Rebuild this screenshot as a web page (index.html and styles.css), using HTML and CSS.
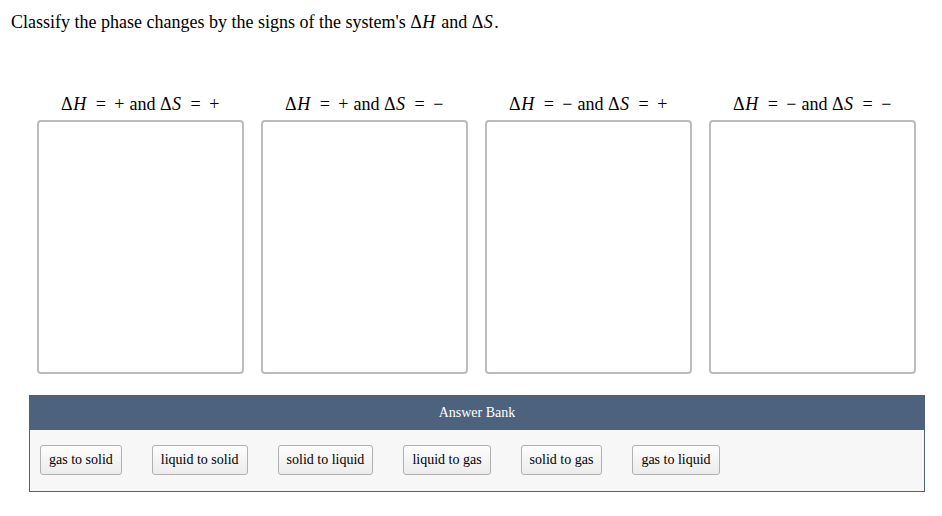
FILE: index.html
```html
<!DOCTYPE html>
<html>
<head>
<meta charset="utf-8">
<link rel="stylesheet" href="styles.css">
</head>
<body>
<div class="page">
  <p class="prompt">Classify the phase changes by the signs of the system's <span class="m">Δ<i>H</i></span> and <span class="m">Δ<i>S</i></span>.</p>
  <div class="bins">
    <div class="bin">
      <div class="label"><span class="m">Δ<i>H</i><span class="op">=</span>+</span> and <span class="m">Δ<i>S</i><span class="op">=</span>+</span></div>
      <div class="drop"></div>
    </div>
    <div class="bin">
      <div class="label"><span class="m">Δ<i>H</i><span class="op">=</span>+</span> and <span class="m">Δ<i>S</i><span class="op">=</span>−</span></div>
      <div class="drop"></div>
    </div>
    <div class="bin">
      <div class="label"><span class="m">Δ<i>H</i><span class="op">=</span>−</span> and <span class="m">Δ<i>S</i><span class="op">=</span>+</span></div>
      <div class="drop"></div>
    </div>
    <div class="bin">
      <div class="label"><span class="m">Δ<i>H</i><span class="op">=</span>−</span> and <span class="m">Δ<i>S</i><span class="op">=</span>−</span></div>
      <div class="drop"></div>
    </div>
  </div>
  <div class="bank">
    <div class="bank-head">Answer Bank</div>
    <div class="bank-body">
      <span class="chip">gas to solid</span>
      <span class="chip">liquid to solid</span>
      <span class="chip">solid to liquid</span>
      <span class="chip">liquid to gas</span>
      <span class="chip">solid to gas</span>
      <span class="chip">gas to liquid</span>
    </div>
  </div>
</div>
</body>
</html>
```
FILE: styles.css
```css
html, body {
  margin: 0;
  padding: 0;
  background: #fff;
}
body {
  font-family: "Liberation Serif", "Times New Roman", serif;
  color: #000;
}
.page {
  padding: 12px 17px 0 11px;
}
.prompt {
  margin: 0;
  font-size: 18px;
  line-height: 20px;
}
.m {
  letter-spacing: 0.5px;
}
.m i {
  font-style: italic;
  padding-right: 1px;
}
.m .op {
  padding: 0 8px;
}
.bins {
  display: grid;
  grid-template-columns: repeat(4, 207px);
  column-gap: 17px;
  margin: 62px 0 0 26px;
}
.bin {
  display: flex;
  flex-direction: column;
}
.label {
  text-align: center;
  font-size: 18px;
  line-height: 20px;
  height: 20px;
  margin-bottom: 6px;
  white-space: nowrap;
}
.drop {
  height: 250px;
  border: 2px solid #bcbcbc;
  border-radius: 4px;
}
.bank {
  margin: 21px 0 0 18px;
  width: 896px;
}
.bank-head {
  background: #4d637d;
  color: #fff;
  font-size: 14px;
  height: 35px;
  line-height: 35px;
  text-align: center;
}
.bank-body {
  background: #f7f7f7;
  border: 1px solid #4d637d;
  border-top: none;
  height: 62px;
  box-sizing: border-box;
  display: flex;
  align-items: flex-start;
  gap: 30px;
  padding: 15px 0 0 10px;
}
.chip {
  display: inline-block;
  font-size: 14px;
  line-height: 28px;
  height: 28px;
  padding: 0 8px;
  border: 1px solid #b0b0b0;
  border-radius: 3px;
  background: linear-gradient(#fdfdfd, #ececec);
  color: #000;
  white-space: nowrap;
}
```
